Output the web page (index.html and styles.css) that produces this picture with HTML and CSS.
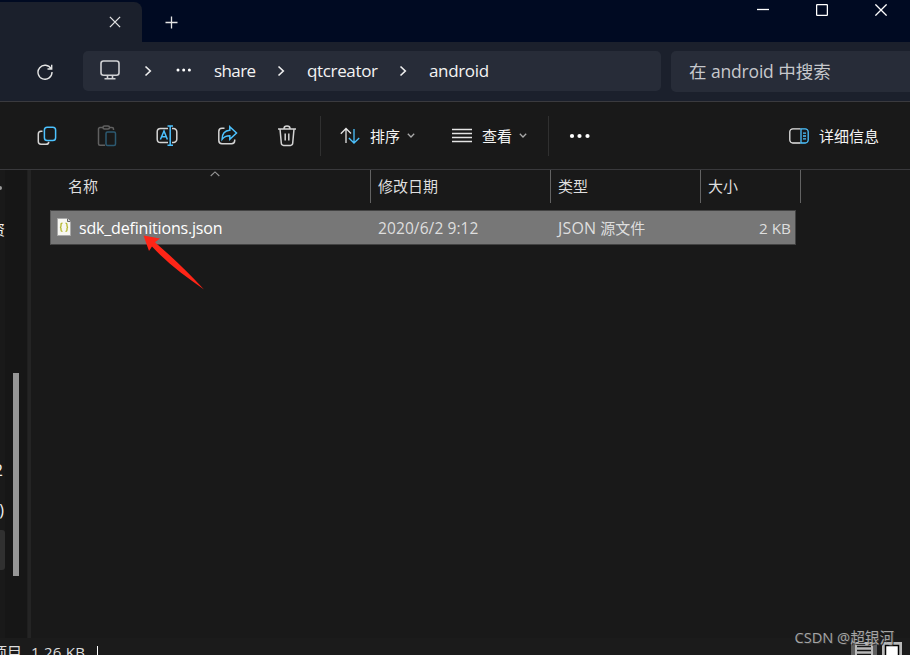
FILE: index.html
```html
<!DOCTYPE html>
<html lang="zh-CN">
<head>
<meta charset="utf-8">
<title>android</title>
<link rel="stylesheet" href="styles.css">
</head>
<body>
<div class="window">
  <header class="titlebar">
    <div class="tab">
      <svg width="12" height="12" viewBox="0 0 12 12"><path d="M.9.9 11.1 11.1M11.1.9.9 11.1"/></svg>
    </div>
    <svg class="new-tab" width="13" height="13" viewBox="0 0 13 13"><path d="M6.5.5v12M.5 6.5h12"/></svg>
    <div class="caption">
      <svg width="12" height="12" viewBox="0 0 12 12"><path d="M0 5.5h12"/></svg>
      <svg width="12" height="12" viewBox="0 0 12 12"><rect x=".6" y=".6" width="10.8" height="10.8" rx="1"/></svg>
      <svg width="12" height="12" viewBox="0 0 12 12"><path d="M.4.4 11.6 11.6M11.6.4.4 11.6"/></svg>
    </div>
  </header>

  <nav class="navbar">
    <svg class="refresh" width="16" height="16" viewBox="0 0 16 16"><path d="M14.2 5A7 7 0 1 0 15 8M14.7.8V5h-4.2"/></svg>
    <div class="address">
      <svg class="pc" width="20" height="20" viewBox="0 0 20 20"><rect x="1" y="1" width="18" height="14.3" rx="2.5"/><path d="M7.5 15.5v3M12.5 15.5v3M4.5 18.7h11"/></svg>
      <svg class="chev c1" width="8" height="12" viewBox="0 0 8 12"><path d="M1.500 1.500 6.300 6 1.500 10.500"/></svg>
      <svg class="dots" width="16" height="4" viewBox="0 0 16 4"><circle cx="2" cy="2" r="1.500"/><circle cx="7.700" cy="2" r="1.500"/><circle cx="13.400" cy="2" r="1.500"/></svg>
      <span class="crumb share">share</span>
      <svg class="chev" width="8" height="12" viewBox="0 0 8 12"><path d="M1.500 1.500 6.300 6 1.500 10.500"/></svg>
      <span class="crumb creator">qtcreator</span>
      <svg class="chev" width="8" height="12" viewBox="0 0 8 12"><path d="M1.500 1.500 6.300 6 1.500 10.500"/></svg>
      <span class="crumb android">android</span>
    </div>
    <div class="search">在 <span>android</span> 中搜索</div>
  </nav>

  <div class="toolbar">
    <div class="tool"><svg width="20" height="20" viewBox="0 0 20 20"><path d="M5.500 5.200H4A2.800 2.800 0 0 0 1.300 8v7.500A2.800 2.800 0 0 0 4 18.300h5a2.800 2.800 0 0 0 2.800-2.500"/><rect class="blue" x="7.400" y="1.200" width="11.200" height="13.400" rx="2.800"/></svg></div>
    <div class="tool disabled"><svg width="20" height="22" viewBox="0 0 20 22"><path d="M8 20.300H3a1.500 1.500 0 0 1-1.500-1.500V4A1.500 1.500 0 0 1 3 2.500h3M12.500 2.500H15A1.500 1.500 0 0 1 16.500 4v1"/><rect x="6" y="1" width="6.500" height="3" rx="1.500"/><rect class="blue" x="9" y="7" width="9.500" height="13.500" rx="1.500"/></svg></div>
    <div class="tool"><svg width="22" height="22" viewBox="0 0 22 22"><path d="M12 3.500H4.500A3.300 3.300 0 0 0 1.200 6.800v7.400a3.300 3.300 0 0 0 3.300 3.300H12M16 3.500h1.500a3.300 3.300 0 0 1 3.300 3.300v7.400a3.300 3.300 0 0 1-3.300 3.300H16"/><path class="blue" d="M11.500 1.100h5.500M11.500 20.300h5.500M14.200 1v19.500M4.400 14.500 8 6l3.400 8.500M5.600 11.800h4.800"/></svg></div>
    <div class="tool"><svg width="21" height="21" viewBox="0 0 21 21"><path d="M7.500 3.300H5A3.200 3.200 0 0 0 1.800 6.500v9A3.200 3.200 0 0 0 5 18.700h9.500a3.200 3.200 0 0 0 3.200-3.200v-1"/><path class="blue" d="M12.800 1.700 19.500 8l-6.700 6.200v-3.500c-3.600-.1-5.700 1-7.700 3.600 0-5.400 2.900-8.700 7.700-9z"/></svg></div>
    <div class="tool"><svg width="20" height="22" viewBox="0 0 20 22"><path d="M1 4h18M7 4V3.500a3 2.500 0 0 1 6 0V4M3 4l1.300 14.300A2.300 2.300 0 0 0 6.600 20.400h6.800a2.300 2.300 0 0 0 2.300-2.100L17 4M8.200 8.500v7M11.800 8.500v7"/></svg></div>
    <i class="divider"></i>
    <div class="command sort">
      <svg width="20" height="18" viewBox="0 0 20 18"><path d="M6 16V1.500M.8 6.700 6 1.500l5 5"/><path class="blue" d="M14 2v14M8.900 11l5.100 5 5.200-5"/></svg>
      <span>排序</span>
      <svg class="down" width="8" height="5" viewBox="0 0 8 5"><path d="M.8.8 4 4 7.200.8"/></svg>
    </div>
    <div class="command view">
      <svg width="20" height="16" viewBox="0 0 20 16"><path d="M0 1.500h20M0 5.500h20M0 9.500h20M0 13.500h20"/></svg>
      <span>查看</span>
      <svg class="down" width="8" height="5" viewBox="0 0 8 5"><path d="M.8.8 4 4 7.200.8"/></svg>
    </div>
    <i class="divider"></i>
    <svg class="more" width="22" height="6" viewBox="0 0 22 6"><circle cx="3" cy="3" r="2.100"/><circle cx="10.500" cy="3" r="2.100"/><circle cx="18.500" cy="3" r="2.100"/></svg>
    <div class="details">
      <svg width="20" height="16" viewBox="0 0 20 16"><path d="M11.500.8H4A3 3 0 0 0 .8 3.800v8A3 3 0 0 0 4 15h7.500"/><path class="blue" d="M12 .8h4a3 3 0 0 1 3.200 3v8A3 3 0 0 1 16 15h-4zM14 5.200h3M14 8h3M14 10.800h3"/></svg>
      <span>详细信息</span>
    </div>
  </div>

  <main class="content">
    <aside class="sidebar">
      <div class="tree">
        <i class="bullet"></i>
        <div class="node drive">资</div>
        <div class="node two">2</div>
        <div class="node paren">)</div>
        <div class="node selected"></div>
      </div>
      <div class="thumb"></div>
    </aside>
    <i class="splitter"></i>
    <section class="files">
      <div class="columns">
        <div class="col name">名称<svg class="sort-mark" width="10" height="6" viewBox="0 0 10 6"><path d="M.7 5 5 .9 9.300 5"/></svg></div>
        <div class="col date">修改日期</div>
        <div class="col type">类型</div>
        <div class="col size">大小</div>
      </div>
      <div class="row">
        <svg class="file-icon" width="14" height="18" viewBox="0 0 14 18"><path class="paper" d="M.5.500h10l3 3v14H.5z"/><path class="fold" d="M10.500.500v3h3"/><path class="brace" d="M5.500 5.200c-1.300 0-1.500.4-1.500 1.500v1.300c0 .8-.3 1.200-1 1.300.7.100 1 .5 1 1.300v1.300c0 1.100.2 1.500 1.500 1.500M8.500 5.200c1.300 0 1.500.4 1.500 1.500v1.300c0 .8.3 1.200 1 1.300-.7.100-1 .5-1 1.300v1.300c0 1.100-.2 1.500-1.500 1.500"/></svg>
        <span class="file-name">sdk_definitions.json</span>
        <span class="file-date">2020/6/2 9:12</span>
        <span class="file-type"><span>JSON</span> 源文件</span>
        <span class="file-size">2 KB</span>
      </div>
      <svg class="arrow" width="62" height="56" viewBox="0 0 62 56"><path d="M.5.500 17 3.500 12 7.200C29 22 44 36 61 54.500 42 41 24 28 9 11.500L6 16z"/></svg>
    </section>
  </main>

  <footer class="status">
    <span class="selection">项目</span><span class="total">1.26 KB</span><i></i>
    <div class="modes">
      <svg width="26" height="16" viewBox="0 0 26 16"><path class="frame" d="M0 0h26v16H0z"/><path class="panel" d="M4 0h18v16H4z"/><path class="lines" d="M6 4.500h14M6 8.500h14M6 12.500h14"/></svg>
      <svg width="20" height="16" viewBox="0 0 20 16"><path class="tile" d="M0 0h20v16H0z"/><path class="page" d="M3.500 3.500h13V18h-13z"/></svg>
    </div>
    <div class="watermark"><span>CSDN @</span>超银河</div>
  </footer>
</div>
</body>
</html>
```
FILE: styles.css
```css
* { box-sizing: border-box; }
body { margin: 0; background: #191919; }
svg { display: block; flex: none; fill: none; stroke: #e4e4e4; stroke-width: 1.3; }
i { display: block; flex: none; }

.window {
  display: flex;
  flex-direction: column;
  width: 910px;
  height: 655px;
  overflow: hidden;
  color: #f4f4f4;
  font: 15px/20px "Open Sans", "Noto Sans CJK SC", sans-serif;
  white-space: nowrap;
}

.titlebar { display: flex; height: 42px; flex: none; background: #000a22; }
.tab { width: 142px; height: 40px; margin-top: 2px; padding: 14px 0 0 109px; background: #1b202c; border-radius: 0 8px 0 0; }
.new-tab { margin: 16px 0 0 23px; }
.caption { display: flex; gap: 47px; margin: 4px 23px 0 auto; }
.caption svg { stroke: #fff; }

.navbar { display: flex; align-items: flex-start; height: 60px; flex: none; padding: 9px 0 0 37px; background: #1b202c; border-bottom: 1px solid #3a3a3e; }
.refresh { margin-top: 13px; stroke-width: 1.4; }
.address { display: flex; flex: none; align-items: center; width: 578px; height: 40px; margin-left: 30px; padding-left: 17px; background: #272c38; border-radius: 5px; }
.pc { stroke: #d0d1d4; stroke-width: 1.6; margin-top: -2px; }
.chev { stroke: #f0f0f0; stroke-width: 1.6; }
.c1 { margin-left: 24px; }
.dots { margin: -2px 0 0 24px; fill: #fff; stroke: none; }
.crumb { height: 20px; font-size: 17px; line-height: 20px; }
.share { width: 43px; margin: 0 20px 0 22px; letter-spacing: -.6px; }
.creator { width: 71px; margin: 0 21px 0 22px; letter-spacing: -.35px; }
.android { margin-left: 22px; letter-spacing: -.35px; }
.search { flex: 1; height: 41px; margin-left: 10px; padding: 10px 0 0 18px; color: #c6c8cc; background: #272c38; border-radius: 5px 0 0 5px; font-size: 17.5px; }
.search span { letter-spacing: -.2px; }

.toolbar { display: flex; align-items: center; height: 68px; flex: none; padding-left: 17px; background: #191919; border-bottom: 1px solid #39393c; }
.tool { display: grid; place-items: center; width: 60px; height: 40px; }
.tool svg { stroke: #d4d4d4; stroke-width: 1.5; }
.blue { stroke: #4cc2ff; }
.disabled { opacity: .38; }
.divider { width: 1px; height: 40px; margin-left: 3px; background: #303030; }
.command { display: flex; align-items: center; gap: 10px; }
.command .down { margin-left: -3px; stroke: #aaa; }
.sort { width: 93px; margin-left: 19px; }
.view { width: 93px; margin-left: 19px; }
.more { margin-left: 20px; fill: #fff; stroke: none; }
.details { display: flex; align-items: center; gap: 10px; margin: 0 31px 0 auto; }

.content { display: flex; height: 468px; flex: none; background: #191919; }
.sidebar { display: flex; width: 27px; background: #161616; }
.tree { display: flex; flex-direction: column; width: 5px; background: #191919; overflow: hidden; }
.bullet { width: 2px; height: 4px; margin-top: 16px; background: #9b9b9b; border-radius: 0 2px 2px 0; }
.node { display: flex; flex: none; justify-content: flex-end; width: 5px; height: 40px; line-height: 40px; overflow: hidden; }
.drive { margin-top: 19px; }
.two { width: 3px; margin-top: 201px; font-size: 16px; }
.paren { width: 4px; font-size: 16px; }
.selected { background: #303030; border-radius: 0 3px 3px 0; }
.thumb { width: 6px; height: 203px; margin: 203px 0 0 8px; background: #969696; }
.splitter { width: 4px; background: #242424; border-left: 1px solid #1f1f1f; }
.files { position: relative; flex: 1; padding-left: 19px; }
.columns { display: flex; height: 40px; }
.col { height: 33px; padding: 6px 0 0 7px; color: #dedede; border-right: 1px solid #626262; }
.name { position: relative; width: 321px; padding-left: 18px; }
.sort-mark { position: absolute; left: 160px; top: 1px; stroke: #969696; stroke-width: 1.1; }
.date { width: 180px; }
.type { width: 150px; }
.size { width: 100px; }
.row { display: flex; align-items: center; width: 746px; height: 35px; padding: 0 4px 0 6px; color: #dedede; background: #777; border: 1px solid #434343; border-left-color: #5a5a5a; }
.file-icon { margin-top: -1px; }
.paper { fill: #f7f7f2; stroke: #aaa; stroke-width: 1; }
.fold { fill: #d8d8d8; stroke: #666; stroke-width: 1; }
.brace { stroke: #b4b72e; stroke-width: 1.3; }
.file-name { width: 299px; margin-left: 8px; color: #fff; font-size: 16px; letter-spacing: -.18px; }
.file-date { width: 180px; font-size: 15.5px; letter-spacing: .1px; }
.file-type { width: 150px; }
.file-type span { font-size: 16px; letter-spacing: .2px; }
.file-size { margin-left: auto; font-size: 15.3px; }
.arrow { position: absolute; left: 112px; top: 65px; fill: #ff2517; stroke: none; }

.status { position: relative; display: flex; height: 17px; background: #1b1b1b; }
.status > span { padding-top: 4px; height: 25px; color: #dedede; }
.selection { width: 22px; display: flex; justify-content: flex-end; overflow: hidden; }
.total { margin-left: 9px; width: 54px; letter-spacing: .25px; }
.status i { width: 1px; height: 10px; margin: 8px 0 0 12px; background: #fff; }
.modes { display: flex; gap: 5px; margin: 4px 8px 0 auto; }
.modes svg { stroke: none; }
.modes .frame { fill: #606060; }
.modes .panel, .modes .tile { fill: #b9b9b9; }
.modes .lines { stroke: #151515; }
.modes .page { fill: #fff; stroke: #000; stroke-width: 1.5; }
.watermark { position: absolute; right: 16px; top: -11px; color: #a5a5a5; font-size: 14.6px; text-shadow: 1px 1px #333; }
```
